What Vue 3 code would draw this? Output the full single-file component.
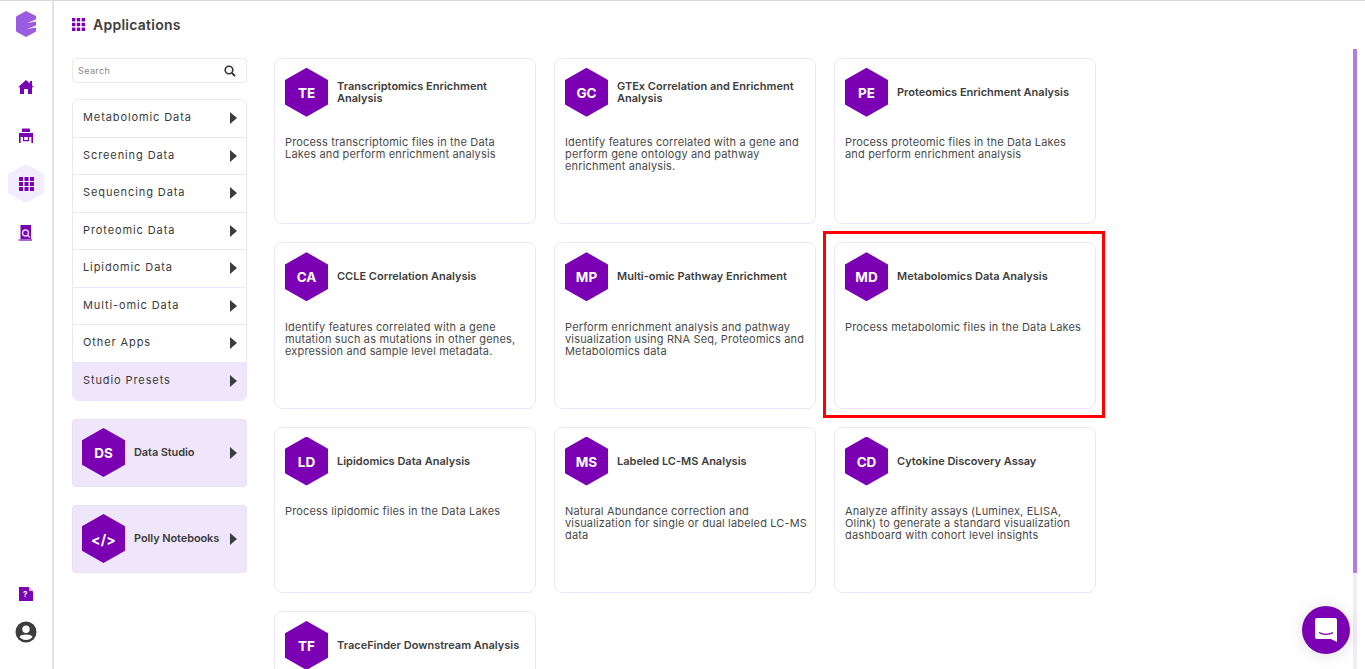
<script setup>
const menu = ["Metabolomic Data", "Screening Data", "Sequencing Data", "Proteomic Data", "Lipidomic Data", "Multi-omic Data", "Other Apps", "Studio Presets"];

const apps = [
  { code: "TE", title: "Transcriptomics Enrichment Analysis", desc: "Process transcriptomic files in the Data Lakes and perform enrichment analysis" },
  { code: "GC", title: "GTEx Correlation and Enrichment Analysis", desc: "Identify features correlated with a gene and perform gene ontology and pathway enrichment analysis." },
  { code: "PE", title: "Proteomics Enrichment Analysis", desc: "Process proteomic files in the Data Lakes and perform enrichment analysis" },
  { code: "CA", title: "CCLE Correlation Analysis", desc: "Identify features correlated with a gene mutation such as mutations in other genes, expression and sample level metadata." },
  { code: "MP", title: "Multi-omic Pathway Enrichment", desc: "Perform enrichment analysis and pathway visualization using RNA Seq, Proteomics and Metabolomics data" },
  { code: "MD", title: "Metabolomics Data Analysis", desc: "Process metabolomic files in the Data Lakes", marked: true },
  { code: "LD", title: "Lipidomics Data Analysis", desc: "Process lipidomic files in the Data Lakes" },
  { code: "MS", title: "Labeled LC-MS Analysis", desc: "Natural Abundance correction and visualization for single or dual labeled LC-MS data" },
  { code: "CD", title: "Cytokine Discovery Assay", desc: "Analyze affinity assays (Luminex, ELISA, Olink) to generate a standard visualization dashboard with cohort level insights" },
  { code: "TF", title: "TraceFinder Downstream Analysis", desc: "" },
];
</script>

<template>
  <div class="page">
    <aside class="rail">
      <svg class="logo" viewBox="0 0 22 26" width="22" height="26">
        <path d="M11 0 L21 5 V8.5 L12 12 L21 10.5 V14.5 L12 18 L21 16.5 V20.5 L11 26 L1 20.5 V5.5 Z" fill="#9b5de0" />
      </svg>
      <svg class="rail-icon home" viewBox="0 0 16 16" width="16" height="16">
        <path d="M8 1 L12 4.6 V2 H14 V6.4 L16 8.2 H14 V15 H10 V10 H6 V15 H2 V8.2 H0 Z" fill="#7b00b4" />
      </svg>
      <svg class="rail-icon desk" viewBox="0 0 16 16" width="16" height="16">
        <path d="M5 0.5 H11 A1 1 0 0 1 12 1.5 V4 H4 V1.5 A1 1 0 0 1 5 0.5 Z M1 5 H15 V15 H13.4 V9 H2.6 V15 H1 Z M5 9 H6.2 V12 H9.8 V9 H11 V13.2 H5 Z" fill="#7b00b4" />
      </svg>
      <div class="rail-active">
        <svg viewBox="0 0 15 14" width="15" height="14">
          <g fill="#7b00b4">
            <rect x="0" y="0" width="4" height="4" /><rect x="5.5" y="0" width="4" height="4" /><rect x="11" y="0" width="4" height="4" />
            <rect x="0" y="5" width="4" height="4" /><rect x="5.5" y="5" width="4" height="4" /><rect x="11" y="5" width="4" height="4" />
            <rect x="0" y="10" width="4" height="4" /><rect x="5.5" y="10" width="4" height="4" /><rect x="11" y="10" width="4" height="4" />
          </g>
        </svg>
      </div>
      <svg class="rail-icon report" viewBox="0 0 16 16" width="16" height="16">
        <path d="M2.5 0 H13 V14 H2.5 Z" fill="#7b00b4" />
        <circle cx="7.5" cy="8" r="3" fill="none" stroke="#e6d5f5" stroke-width="1.4" />
        <path d="M9.6 10.2 L12 12.6" stroke="#e6d5f5" stroke-width="1.4" />
        <path d="M0.5 15 H14" stroke="#7b00b4" stroke-width="1.2" />
      </svg>
      <div class="rail-spacer"></div>
      <div class="help">
        <svg viewBox="0 0 14 14" width="14" height="14">
          <path d="M0 0 H9.5 L14 4.5 V14 H0 Z" fill="#7b00b4" />
          <path d="M10 0 L14 4 H10 Z" fill="#d9b8ee" />
        </svg>
        <span>?</span>
      </div>
      <svg class="user" viewBox="0 0 22 22" width="22" height="22">
        <circle cx="11" cy="11" r="10.5" fill="#3d3d3d" />
        <circle cx="11" cy="8.2" r="3.7" fill="#fff" />
        <path d="M4.5 16 C6 12.8 16 12.8 17.5 16 C16 18 13.5 19 11 19 C8.5 19 6 18 4.5 16 Z" fill="#fff" />
      </svg>
    </aside>

    <main class="main">
      <header class="head">
        <svg viewBox="0 0 13 13" width="13" height="13">
          <g fill="#7b00b4">
            <rect x="0" y="0" width="3.4" height="3.4" /><rect x="4.8" y="0" width="3.4" height="3.4" /><rect x="9.6" y="0" width="3.4" height="3.4" />
            <rect x="0" y="4.8" width="3.4" height="3.4" /><rect x="4.8" y="4.8" width="3.4" height="3.4" /><rect x="9.6" y="4.8" width="3.4" height="3.4" />
            <rect x="0" y="9.6" width="3.4" height="3.4" /><rect x="4.8" y="9.6" width="3.4" height="3.4" /><rect x="9.6" y="9.6" width="3.4" height="3.4" />
          </g>
        </svg>
        <h1>Applications</h1>
      </header>

      <div class="content">
        <section class="filters">
          <div class="search">
            <span>Search</span>
            <svg viewBox="0 0 12 12" width="12" height="12">
              <circle cx="5" cy="5" r="3.8" fill="none" stroke="#333" stroke-width="1.6" />
              <path d="M7.8 7.8 L11 11" stroke="#333" stroke-width="1.9" />
            </svg>
          </div>

          <ul class="menu">
            <li v-for="item in menu" :key="item" :class="{ on: item === 'Studio Presets' }">
              <span>{{ item }}</span>
              <i class="arrow"></i>
            </li>
          </ul>

          <div class="tile">
            <div class="hex">DS</div>
            <b>Data Studio</b>
            <i class="arrow"></i>
          </div>
          <div class="tile">
            <div class="hex code">&lt;/&gt;</div>
            <b>Polly Notebooks</b>
            <i class="arrow"></i>
          </div>
        </section>

        <section class="grid">
          <article v-for="app in apps" :key="app.code" class="card">
            <div class="card-top">
              <div class="hex">{{ app.code }}</div>
              <h3>{{ app.title }}</h3>
            </div>
            <p>{{ app.desc }}</p>
            <div v-if="app.marked" class="mark"></div>
          </article>
        </section>
      </div>
    </main>

    <div class="scrollbar"><div class="thumb"></div></div>

    <button class="chat">
      <svg viewBox="0 0 24 26" width="24" height="26">
        <path d="M3 1 H21 A2 2 0 0 1 23 3 V25 L17 22 H3 A2 2 0 0 1 1 20 V3 A2 2 0 0 1 3 1 Z" fill="#fff" />
        <path d="M5 15.5 C9 18 15 18 19 15.5" fill="none" stroke="#7b00b4" stroke-width="1.3" />
      </svg>
    </button>
  </div>
</template>

<style scoped>
.page {
  position: relative;
  display: flex;
  height: 669px;
  overflow: hidden;
  border-top: 1px solid #d9d9d9;
  box-sizing: border-box;
  background: #fff;
  font-family: "Inter", "Open Sans", sans-serif;
  color: #3d3d3d;
}

.rail {
  width: 54px;
  flex: none;
  border-right: 2px solid #e3e3e3;
  display: flex;
  flex-direction: column;
  align-items: center;
  padding: 10px 0 26px;
  box-sizing: border-box;
  height: 668px;
}
.rail-icon { display: block; flex: none; }
.logo { flex: none; }
.home { margin-top: 42px; }
.desk { margin-top: 33px; }
.rail-active {
  width: 36px;
  height: 39px;
  flex: none;
  margin-top: 20px;
  background: #f2ecfd;
  clip-path: polygon(50% 0, 100% 25%, 100% 75%, 50% 100%, 0 75%, 0 25%);
  display: flex;
  align-items: center;
  justify-content: center;
}
.report { margin-top: 22px; }
.rail-spacer { flex: 1; }
.help {
  position: relative;
  width: 14px;
  height: 14px;
  margin-bottom: 20px;
}
.help svg { display: block; }
.help span {
  position: absolute;
  left: 4px;
  top: 3px;
  font-size: 8px;
  line-height: 9px;
  font-weight: 700;
  color: #fff;
}

.main {
  flex: 1;
  min-width: 0;
  padding: 15px 0 0 18px;
}
.head {
  display: flex;
  align-items: center;
  gap: 8px;
  height: 17px;
}
.head h1 {
  margin: 0;
  font-size: 14px;
  font-weight: 600;
  letter-spacing: 0.25px;
  color: #3d3d3d;
}

.content {
  display: flex;
  margin-top: 25px;
}
.filters {
  width: 175px;
  flex: none;
}
.search {
  height: 25px;
  border: 1px solid #e9e9ee;
  border-radius: 4px;
  box-sizing: border-box;
  display: flex;
  align-items: center;
  justify-content: space-between;
  padding: 0 10px 0 5px;
  font-size: 9px;
  letter-spacing: 0.4px;
  color: #8a8a8a;
}
.menu {
  list-style: none;
  margin: 16px 0 0;
  padding: 0;
  border: 1px solid #ece6fb;
  border-radius: 6px;
  overflow: hidden;
}
.menu li {
  height: 37.5px;
  box-sizing: border-box;
  display: flex;
  align-items: center;
  justify-content: space-between;
  padding: 0 9px 1px 10px;
  border-bottom: 1px solid #ece6fb;
  font-size: 11px;
  letter-spacing: 0.9px;
  color: #3a3a3a;
}
.menu li span { margin-top: -1px; }
.menu li .arrow { margin-top: 1px; }
.menu li:last-child { border-bottom: 0; }
.menu li.on { background: #efe6fc; }
.arrow {
  display: block;
  width: 0;
  height: 0;
  border-left: 7px solid #3d3d3d;
  border-top: 6px solid transparent;
  border-bottom: 6px solid transparent;
}

.tile {
  height: 68px;
  margin-top: 18px;
  display: flex;
  align-items: center;
  padding: 0 9px 0 9px;
  box-sizing: border-box;
  background: #efe6fc;
  border: 1px solid #e6e2ee;
  border-radius: 4px;
}
.tile .hex { margin-top: -1px; }
.tile b {
  flex: 1;
  margin-left: 9px;
  padding-bottom: 3px;
  font-size: 11px;
  font-weight: 600;
  letter-spacing: -0.1px;
  white-space: nowrap;
  color: #3d3d3d;
}

.hex {
  width: 43px;
  height: 49px;
  flex: none;
  box-sizing: border-box;
  padding-top: 1px;
  clip-path: polygon(50% 0, 100% 25%, 100% 75%, 50% 100%, 0 75%, 0 25%);
  background: #7b00b4;
  color: #fff;
  font-size: 13.5px;
  font-weight: 700;
  display: flex;
  align-items: center;
  justify-content: center;
}
.hex.code { font-size: 14px; letter-spacing: 0.2px; }

.grid {
  display: grid;
  grid-template-columns: repeat(3, 262px);
  grid-auto-rows: 166.4px;
  gap: 18px;
  margin-left: 27px;
  margin-top: -0.2px;
}
.card {
  position: relative;
  border: 1px solid #ece6fb;
  border-radius: 8px;
  box-sizing: border-box;
  padding: 9px 10px;
}
.card-top {
  display: flex;
  align-items: center;
  gap: 9px;
}
.card-top h3 {
  margin: 0 0 1px;
  font-size: 11px;
  line-height: 12px;
  font-weight: 600;
  color: #3d3d3d;
}
.card p {
  margin: 19.5px -3.5px 0 0;
  font-size: 11px;
  line-height: 12px;
  letter-spacing: 0.16px;
  color: #4a4a4a;
}
.mark {
  position: absolute;
  left: -12px;
  top: -12px;
  right: -10px;
  bottom: -10px;
  border: 3px solid #ff0000;
}

.scrollbar {
  position: absolute;
  left: 1353px;
  top: 48px;
  bottom: 0;
  width: 4px;
  background: #f1ecfa;
}
.thumb {
  height: 524px;
  background: #b27ce2;
}
.chat {
  position: absolute;
  left: 1302px;
  top: 605px;
  width: 48px;
  height: 48px;
  border: 0;
  border-radius: 50%;
  padding: 0;
  background: #7b00b4;
  display: flex;
  align-items: center;
  justify-content: center;
  box-shadow: 0 1px 16px rgba(0, 0, 0, 0.12);
}
</style>
